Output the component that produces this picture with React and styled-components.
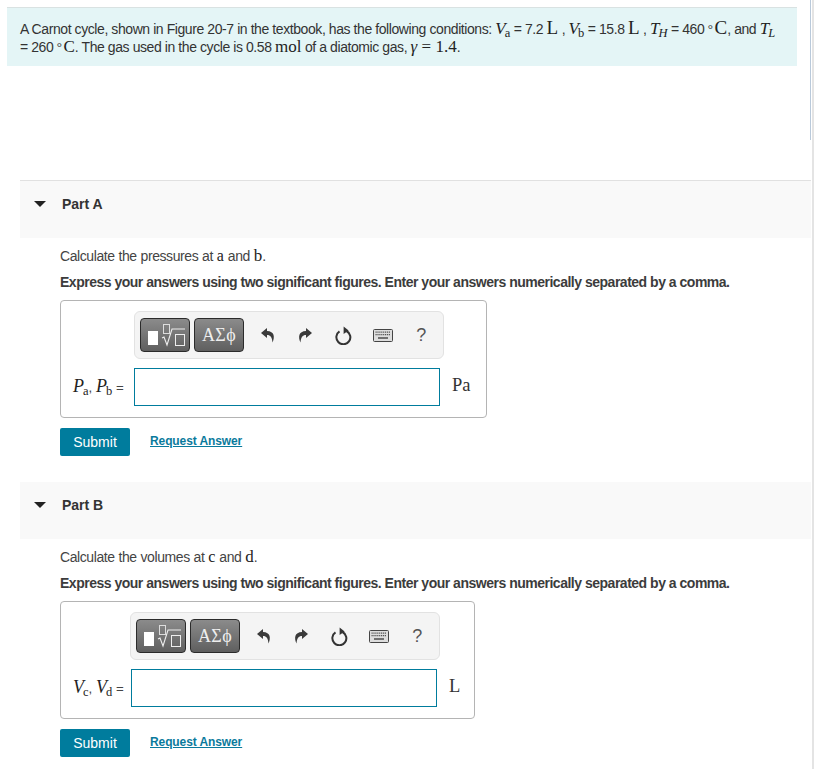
import React from 'react';
import styled, { createGlobalStyle } from 'styled-components';

const Global = createGlobalStyle`
  html, body { margin: 0; padding: 0; background: #fff; }
  body {
    font-family: "Liberation Sans", Arial, sans-serif;
    font-size: 14px;
    color: #333;
    overflow: hidden;
  }
`;

const Page = styled.div`
  position: relative;
  width: 814px;
  height: 769px;
  overflow: hidden;
`;
const ScrollTrack = styled.div`
  position: absolute;
  top: 0;
  right: 0;
  bottom: 0;
  width: 2px;
  background: #e4e4e4;
`;
const ScrollThumb = styled.div`
  position: absolute;
  top: 0;
  right: 3px;
  width: 1px;
  height: 140px;
  background: #b9c9da;
`;
const Intro = styled.div`
  margin: 7px 17px 0 7px;
  height: 59px;
  padding: 12px 13px 0;
  box-sizing: border-box;
  background: #e4f5f6;
  border-top: 1px solid #d9e2e2;
  line-height: 18px;
  white-space: nowrap;
  letter-spacing: -0.42px;
`;
const PartHeader = styled.div`
  display: flex;
  align-items: center;
  gap: 16px;
  height: ${({ $line }) => ($line ? 58 : 57)}px;
  margin: ${({ $top }) => $top}px 3px 0 20px;
  padding: 0 0 11px 14px;
  box-sizing: border-box;
  background: #f9f9f9;
  border-top: ${({ $line }) => ($line ? '1px solid #e1e1e1' : 'none')};
  font-weight: bold;
  color: #333;
`;
const Caret = styled.span`
  width: 0;
  height: 0;
  border-left: 6px solid transparent;
  border-right: 6px solid transparent;
  border-top: 6px solid #222;
`;
const PartBody = styled.div`
  padding: 9px 0 0 60px;
`;
const Prompt = styled.p`
  margin: 0;
  line-height: 18px;
  letter-spacing: -0.42px;
  word-spacing: 0.4px;
  color: #444;
`;
const Instruction = styled.p`
  margin: 8px 0 9px;
  line-height: 18px;
  font-weight: bold;
  color: #3c3c3c;
  letter-spacing: -0.49px;
`;
const AnswerBox = styled.div`
  display: flex;
  flex-direction: column;
  width: ${({ $width }) => $width}px;
  height: 118px;
  padding: 10px 0 0 12px;
  box-sizing: border-box;
  border: 1px solid #b4b4b4;
  border-radius: 4px;
`;
const Toolbar = styled.div`
  display: flex;
  align-items: center;
  width: 310px;
  height: 48px;
  margin-left: ${({ $indent }) => $indent}px;
  padding-left: 5px;
  box-sizing: border-box;
  background: #f4f4f4;
  border: 1px solid #e2e2e2;
  border-radius: 6px;
`;
const ToolGroup = styled.button`
  display: flex;
  align-items: center;
  justify-content: center;
  width: 50px;
  height: 34px;
  margin-right: 4px;
  padding: 0;
  background: linear-gradient(#8b8b8b, #5f5f5f);
  border: 1px solid #2b2b2b;
  border-radius: 4px;
  color: #eee;
  font-family: "Liberation Serif", serif;
  font-size: 18px;
  letter-spacing: 0.3px;
`;
const ToolIcon = styled.span`
  display: flex;
  align-items: center;
  justify-content: center;
  width: 38.5px;
  height: 34px;
  color: #444;
`;
const Help = styled.span`
  font-size: 18px;
  color: #555;
`;
const InputRow = styled.div`
  display: flex;
  align-items: center;
  margin-top: 9px;
`;
const Label = styled.span`
  width: ${({ $width }) => $width}px;
  white-space: nowrap;
  font-size: 13.3px;
  color: #444;
`;
const Input = styled.div`
  width: 306px;
  height: 38px;
  box-sizing: border-box;
  border: 1px solid #007c9d;
`;
const Unit = styled.span`
  margin: 0 0 3px ${({ $gap }) => $gap}px;
  font-family: "Liberation Serif", serif;
  font-size: 18.5px;
  color: #333;
`;
const Actions = styled.div`
  display: flex;
  align-items: center;
  gap: 20px;
  margin-top: 10px;
`;
const Submit = styled.button`
  width: 70px;
  height: 28px;
  padding: 0;
  border: none;
  border-radius: 2px;
  background: #007c9d;
  color: #fff;
  font-family: inherit;
  font-size: 14px;
`;
const RequestLink = styled.a`
  margin-bottom: 3px;
  color: #0a7a9c;
  font-size: 12px;
  font-weight: bold;
  letter-spacing: -0.1px;
  text-decoration: underline;
`;
const M = styled.span`
  font-family: "Liberation Serif", serif;
  font-size: ${({ $size }) => $size || 17}px;
  letter-spacing: 0;
  line-height: 0;
  font-style: ${({ $i }) => ($i ? 'italic' : 'normal')};
  color: #222;
  sub {
    font-size: 12.5px;
    font-style: ${({ $subItalic }) => ($subItalic ? 'italic' : 'normal')};
    line-height: 0;
    vertical-align: -3px;
    margin-left: -1px;
  }
`;
const Degree = styled.span`
  font-family: "Liberation Serif", serif;
  font-size: 13px;
  letter-spacing: 1.5px;
  vertical-align: 1px;
`;

const UndoIcon = ({ flip }) => (
  <svg width="15" height="16" viewBox="0 0 15 16" style={flip ? { transform: 'scaleX(-1)' } : undefined}>
    <path d="M7 1 L1 6 L7 11 L7 8 C10.5 8 12 10 12.5 15.5 C15 10 14.5 4.3 7 4 Z" fill="#3a3a3a" />
  </svg>
);

const ResetIcon = () => (
  <svg width="18" height="19" viewBox="0 0 18 19">
    <path d="M11.5 5 A7 7 0 1 1 4.5 5.4" fill="none" stroke="#333" strokeWidth="2" />
    <path d="M8.6 0.6 L13.6 4.6 L8.6 8 Z" fill="#333" />
  </svg>
);

const KeyboardIcon = () => (
  <svg width="20" height="13" viewBox="0 0 20 13">
    <rect x="0.5" y="0.5" width="19" height="12" rx="1" fill="#ddd" stroke="#444" />
    <path d="M2.5 3.2 H17.5 M2.5 5.6 H17.5" stroke="#555" strokeWidth="1.3" strokeDasharray="1.2 0.7" />
    <path d="M5 9 H15" stroke="#555" strokeWidth="1.6" />
  </svg>
);

const TemplatesIcon = () => (
  <svg width="48" height="32" viewBox="0 0 48 32">
    <rect x="7" y="12" width="10" height="14" fill="#fff" />
    <rect x="22.5" y="5.5" width="6" height="9" fill="none" stroke="#ddd" />
    <path d="M21 19 L23 18 L26 26 L31 10 H44" fill="none" stroke="#eee" strokeWidth="1.1" />
    <rect x="34.5" y="15.5" width="9" height="11" fill="none" stroke="#eee" />
  </svg>
);

const AnswerToolbar = ({ indent }) => (
  <Toolbar $indent={indent}>
    <ToolGroup><TemplatesIcon /></ToolGroup>
    <ToolGroup>ΑΣϕ</ToolGroup>
    <ToolIcon><UndoIcon /></ToolIcon>
    <ToolIcon><UndoIcon flip /></ToolIcon>
    <ToolIcon><ResetIcon /></ToolIcon>
    <ToolIcon><KeyboardIcon /></ToolIcon>
    <ToolIcon><Help>?</Help></ToolIcon>
  </Toolbar>
);

const Part = ({ name, top, line, prompt, boxWidth, indent, label, labelWidth, unit, unitGap }) => (
  <section>
    <PartHeader $top={top} $line={line}>
      <Caret />
      <span>{name}</span>
    </PartHeader>
    <PartBody>
      <Prompt>{prompt}</Prompt>
      <Instruction>
        Express your answers using two significant figures. Enter your answers numerically separated by a comma.
      </Instruction>
      <AnswerBox $width={boxWidth}>
        <AnswerToolbar indent={indent} />
        <InputRow>
          <Label $width={labelWidth}>{label}</Label>
          <Input />
          <Unit $gap={unitGap}>{unit}</Unit>
        </InputRow>
      </AnswerBox>
      <Actions>
        <Submit>Submit</Submit>
        <RequestLink href="#">Request Answer</RequestLink>
      </Actions>
    </PartBody>
  </section>
);

export default function App() {
  return (
    <Page>
      <Global />
      <ScrollTrack />
      <ScrollThumb />
      <Intro>
        A Carnot cycle, shown in Figure 20-7 in the textbook, has the following conditions:{' '}
        <M $i>V<sub>a</sub></M> = 7.2 <M $size={19}>L</M> , <M $i>V<sub>b</sub></M> = 15.8 <M $size={19}>L</M> ,{' '}
        <M $i $subItalic>T<sub>H</sub></M> = 460 <Degree>°</Degree><M $size={19}>C</M>, and <M $i $subItalic>T<sub>L</sub></M>
        <br />
        = 260 <Degree>°</Degree><M>C</M>. The gas used in the cycle is 0.58 <M>mol</M> of a diatomic gas, <M $i>γ</M><M> = 1.4</M>.
      </Intro>
      <Part
        name="Part A"
        top={114}
        line
        prompt={<>Calculate the pressures at <M $size={16}>a</M> and <M>b</M>.</>}
        boxWidth={427}
        indent={61}
        label={<><M $i $size={18}>P<sub>a</sub></M>, <M $i $size={18}>P<sub>b</sub></M> =</>}
        labelWidth={61}
        unit="Pa"
        unitGap={12}
      />
      <Part
        name="Part B"
        top={26}
        prompt={<>Calculate the volumes at <M $size={16}>c</M> and <M>d</M>.</>}
        boxWidth={415}
        indent={57}
        label={<><M $i $size={18}>V<sub>c</sub></M>, <M $i $size={18}>V<sub>d</sub></M> =</>}
        labelWidth={58}
        unit="L"
        unitGap={12}
      />
    </Page>
  );
}
